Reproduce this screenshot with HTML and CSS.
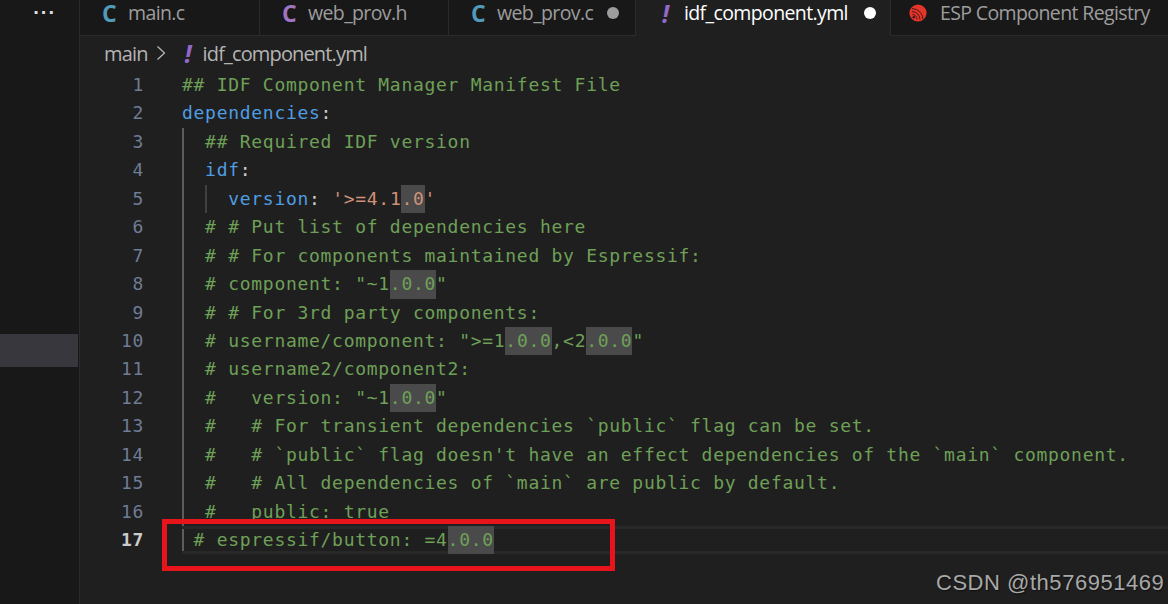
FILE: index.html
```html
<!DOCTYPE html>
<html lang="en">
<head>
<meta charset="utf-8">
<title>idf_component.yml</title>
<link rel="stylesheet" href="styles.css">
</head>
<body>
<div class="app">
  <aside class="side">
    <div class="more">···</div>
    <div class="side-row"></div>
  </aside>
  <main class="main">
    <nav class="tabs">
      <div class="tab t1"><span class="ic cb">C</span><span>main.c</span></div>
      <div class="tab t2"><span class="ic cp">C</span><span>web_prov.h</span></div>
      <div class="tab t3"><span class="ic cb">C</span><span>web_prov.c</span><span class="dot"></span></div>
      <div class="tab t4 active"><span class="ic bang">!</span><span>idf_component.yml</span><span class="dot"></span></div>
      <div class="tab t5">
        <svg class="esp" viewBox="0 0 18 18" width="18" height="18" aria-hidden="true">
          <circle cx="9" cy="9" r="8.6" fill="#e5352b"/>
          <g fill="none" stroke="#3a1512" stroke-width="0.9">
            <path d="M3 4.6A11 11 0 0 1 14 15.4"/>
            <path d="M3 7.6A8 8 0 0 1 11 15.8"/>
            <path d="M3.4 10.6A5 5 0 0 1 8 15.6"/>
          </g>
          <circle cx="4.8" cy="13.2" r="1.2" fill="#3a1512"/>
        </svg>
        <span>ESP Component Registry</span>
      </div>
    </nav>
    <div class="crumbs"><span>main</span>
      <svg class="chev" viewBox="0 0 10 16" width="10" height="16" aria-hidden="true"><path d="M1.5 1.5 8.5 8l-7 6.5" fill="none" stroke="#bbb" stroke-width="1.2"/></svg>
      <span class="ic bang">!</span><span>idf_component.yml</span></div>
    <section class="editor">
      <div class="gutter">
        <div>1</div><div>2</div><div>3</div><div>4</div><div>5</div><div>6</div><div>7</div><div>8</div><div>9</div><div>10</div><div>11</div><div>12</div><div>13</div><div>14</div><div>15</div><div>16</div><div class="cur">17</div>
      </div>
      <div class="code">
        <div class="ln c">## IDF Component Manager Manifest File</div>
        <div class="ln"><span class="k">dependencies</span>:</div>
        <div class="ln g c">  ## Required IDF version</div>
        <div class="ln g">  <span class="k">idf</span>:</div>
        <div class="ln g gg">    <span class="k">version</span>: <span class="s">'&gt;=4.1<span class="hl">.0</span>'</span></div>
        <div class="ln g c">  # # Put list of dependencies here</div>
        <div class="ln g c">  # # For components maintained by Espressif:</div>
        <div class="ln g c">  # component: "~1<span class="hl">.0.0</span>"</div>
        <div class="ln g c">  # # For 3rd party components:</div>
        <div class="ln g c">  # username/component: "&gt;=1<span class="hl">.0.0</span>,&lt;2<span class="hl">.0.0</span>"</div>
        <div class="ln g c">  # username2/component2:</div>
        <div class="ln g c">  #   version: "~1<span class="hl">.0.0</span>"</div>
        <div class="ln g c">  #   # For transient dependencies `public` flag can be set.</div>
        <div class="ln g c">  #   # `public` flag doesn't have an effect dependencies of the `main` component.</div>
        <div class="ln g c">  #   # All dependencies of `main` are public by default.</div>
        <div class="ln g c">  #   public: true</div>
        <div class="ln g c now"> # espressif/button: =4<span class="hl">.0.0</span></div>
      </div>
    </section>
  </main>
</div>
<div class="mark"></div>
<div class="wm">CSDN @th576951469</div>
</body>
</html>
```
FILE: styles.css
```css
* { box-sizing: border-box; }
html, body { margin: 0; height: 100%; overflow: hidden; background: #1f1f1f; }
.app { display: flex; width: 1168px; height: 604px; font-family: "Open Sans", sans-serif; }

.side { width: 80px; flex: none; background: #181818; border-right: 1px solid #2b2b2b; }
.more { height: 334px; padding: 3px 0 0 33px; color: #ddd; font: bold 16px/20px "DejaVu Sans", sans-serif; letter-spacing: 1.5px; }
.side-row { height: 33px; width: 78px; background: #37373d; }

.main { flex: 1; min-width: 0; display: flex; flex-direction: column; }

.tabs { display: flex; height: 36px; flex: none; background: #181818; border-bottom: 1px solid #2b2b2b; }
.tab { display: flex; align-items: center; height: 36px; padding-bottom: 11px; border-right: 1px solid #2b2b2b; color: #9d9d9d; font-size: 19.5px; line-height: 22px; letter-spacing: -0.62px; white-space: nowrap; }
.tab.active { background: #1f1f1f; color: #fff; border-bottom: 1px solid #1f1f1f; padding-bottom: 10px; }
.t1 { width: 180px; padding-left: 22px; }
.t2 { width: 189px; padding-left: 22px; }
.t3 { width: 187px; padding-left: 22px; }
.t4 { width: 255px; padding-left: 26px; }
.t5 { flex: 1; padding-left: 18px; border-right: 0; }

.ic { font-weight: 700; font-size: 23px; line-height: 22px; width: 26px; flex: none; letter-spacing: 0; }
.cb { color: #519aba; }
.cp { color: #a074c4; }
.bang { color: #9468c8; font-style: italic; width: 22px; font-size: 25px; }
.dot { width: 12px; height: 12px; border-radius: 50%; background: currentColor; margin-left: 14px; }
.t4 .dot { margin-left: 16px; }
.esp { margin-right: 13px; flex: none; }

.crumbs { height: 35px; flex: none; display: flex; align-items: center; padding-left: 24px; padding-bottom: 1px; color: #b4b4b4; font-size: 20px; letter-spacing: -0.85px; }
.chev { margin: 0 19px 0 8px; }
.crumbs .bang { font-size: 25px; width: 18px; line-height: 1; }

.editor { display: flex; flex: 1; font: 18px/28.44px "DejaVu Sans Mono", monospace; letter-spacing: 0.71px; }
.gutter { width: 64px; flex: none; text-align: right; color: #6e7c95; }
.gutter .cur { color: #ccc; font-weight: 700; }
.code { margin-left: 38px; flex: 1; min-width: 0; color: #ccc; }
.ln { height: 28.44px; white-space: pre; }
.c { color: #6ea058; }
.k { color: #4f9de2; }
.s { color: #ce9178; }
.hl { display: inline-block; background: #4a4a4a; }
.g { background: linear-gradient(#5c5c5c, #5c5c5c) 0 0 / 2px 100% no-repeat; }
.gg { background: linear-gradient(#5c5c5c, #5c5c5c) 0 0 / 2px 100% no-repeat, linear-gradient(#404040, #404040) 23px 0 / 2px 100% no-repeat; }
.now { box-shadow: inset 0 3px 0 #282828, inset 0 -3px 0 #282828; }

.mark { position: absolute; left: 162px; top: 519px; width: 453px; height: 52px; border: 5px solid #e8141b; }
.wm { position: absolute; left: 936px; top: 571px; font: 22px/24px "Liberation Sans", sans-serif; letter-spacing: 0.53px; color: #a8a8a8; text-shadow: 1px 1px 1px #111; }
```
